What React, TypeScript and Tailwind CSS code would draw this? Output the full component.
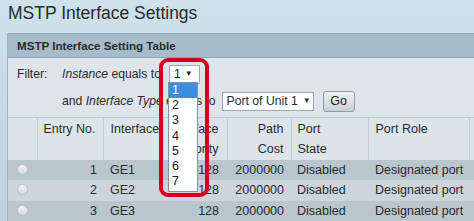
import React from 'react';

const rows = [
  { no: 1, port: 'GE1', dark: true },
  { no: 2, port: 'GE2', dark: false },
  { no: 3, port: 'GE3', dark: true },
];

function Radio() {
  return (
    <span className="inline-block w-[11px] h-[11px] rounded-full border border-[#b9c0c5] bg-gradient-to-b from-[#f4f6f7] to-[#d3d8db]" />
  );
}

export default function App() {
  return (
    <div
      className="w-[474px] h-[221px] overflow-hidden relative bg-gradient-to-b from-[#cfe1e9] to-[#bcd2dc] text-[#222]"
      style={{ fontFamily: '"Liberation Sans", Arial, sans-serif' }}
    >
      {/* 标题 */}
      <h1 className="pl-[8px] pt-[1px] text-[17.5px] leading-[24px] text-[#2a2a2a]">MSTP Interface Settings</h1>

      <div className="ml-[7px] mt-[8px] border-l border-[#9fb2be]">
        {/* 表头栏 */}
        <div className="h-[25px] bg-[#a6bccb] border-t border-[#93aab9] border-b border-b-[#8ea5b3] pl-[9px] flex items-center text-[11.6px] font-bold text-[#2b2b2b]">
          MSTP Interface Setting Table
        </div>

        {/* 过滤 */}
        <div className="h-[59px] bg-[#dde5ea] text-[12.2px] text-[#2b2b2b] pl-[9px]">
          <div className="h-[29px] flex items-center pt-[3px]">
            <span className="w-[45px]">Filter:</span>
            <span><i>Instance</i> equals to</span>
            <div className="ml-[8px] w-[31px] h-[19px] bg-white border border-[#9aa7b0] flex items-center pl-[4px] gap-[4px]">
              <span>1</span>
              <span className="text-[8px]">▼</span>
            </div>
          </div>
          <div className="h-[28px] flex items-center pl-[45px]">
            <span>and <i>Interface Type</i> equals to</span>
            <div className="ml-[6px] w-[92px] h-[19px] bg-white border border-[#9aa7b0] flex items-center pl-[4px] gap-[5px]">
              <span>Port of Unit 1</span>
              <span className="text-[8px]">▼</span>
            </div>
            <button className="ml-[9px] w-[32px] h-[21px] rounded-[3px] border border-[#8b9aa4] bg-gradient-to-b from-[#f1f3f4] to-[#c9d0d5] text-[12.5px] text-[#222]">
              Go
            </button>
          </div>
        </div>

        {/* 表格 */}
        <table className="table-fixed border-collapse text-[12.5px] text-[#2b2b2b] w-[480px]">
          <colgroup>
            <col className="w-[29px]" />
            <col className="w-[66px]" />
            <col className="w-[60px]" />
            <col className="w-[64px]" />
            <col className="w-[64px]" />
            <col className="w-[77px]" />
            <col className="w-[101px]" />
            <col className="w-[19px]" />
          </colgroup>
          <thead>
            <tr className="h-[42px] bg-[#dce4e9] align-top leading-[20px]">
              <th className="border-r border-t border-[#c3cfd7]" />
              <th className="border-r border-t border-[#c3cfd7] font-normal text-right pr-[7px] pt-[1px]">Entry No.</th>
              <th className="border-r border-t border-[#c3cfd7] font-normal text-left pl-[7px] pt-[1px]">Interface</th>
              <th className="border-r border-t border-[#c3cfd7] font-normal text-right pr-[8px] pt-[1px]">Interface<br />Priority</th>
              <th className="border-r border-t border-[#c3cfd7] font-normal text-right pr-[7px] pt-[1px]">Path<br />Cost</th>
              <th className="border-r border-t border-[#c3cfd7] font-normal text-left pl-[6px] pt-[1px]">Port<br />State</th>
              <th className="border-r border-t border-[#c3cfd7] font-normal text-left pl-[7px] pt-[1px]">Port Role</th>
              <th className="border-t border-[#c3cfd7]" />
            </tr>
          </thead>
          <tbody>
            {rows.map((r) => (
              <tr key={r.no} className={`h-[20.5px] ${r.dark ? 'bg-[#b9c6cd]' : 'bg-[#cbd5db]'}`}>
                <td className="text-center pt-[2px]"><Radio /></td>
                <td className="text-right pr-[6px]">{r.no}</td>
                <td className="pl-[7px]">{r.port}</td>
                <td className="text-right pr-[8px]">128</td>
                <td className="text-right pr-[7px]">2000000</td>
                <td className="pl-[6px]">Disabled</td>
                <td className="pl-[7px]">Designated port</td>
                <td />
              </tr>
            ))}
          </tbody>
        </table>
      </div>

      {/* 下拉列表 */}
      <div className="absolute left-[168px] top-[82px] w-[30px] h-[110px] bg-white border border-[#7d93a6] text-[12.5px] leading-[15.2px] text-[#222]">
        {[1, 2, 3, 4, 5, 6, 7].map((n) => (
          <div key={n} className={`pl-[3px] ${n === 1 ? 'bg-[#3d8ee0] text-white' : ''}`}>{n}</div>
        ))}
      </div>

      {/* 红框标注 */}
      <div className="absolute left-[159px] top-[58px] w-[50px] h-[139px] border-4 border-[#d5001b] rounded-[9px]" />
    </div>
  );
}
